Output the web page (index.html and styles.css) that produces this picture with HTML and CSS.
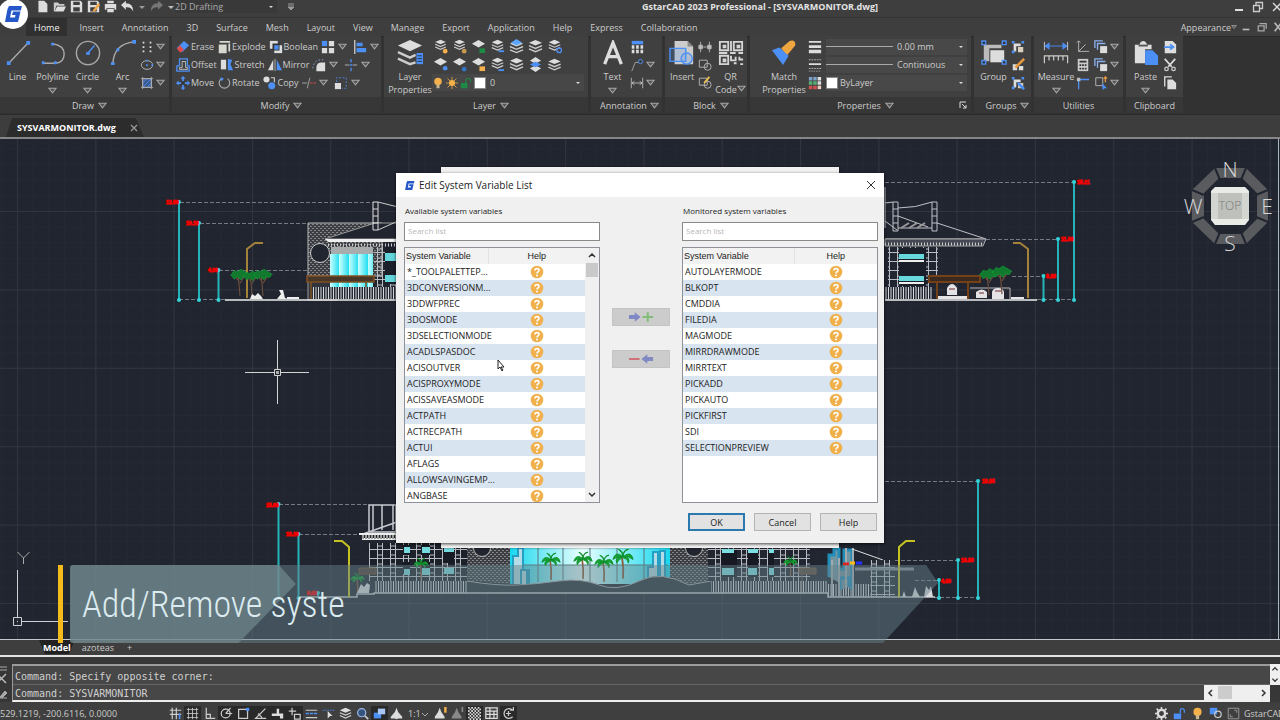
FILE: index.html
```html
<!DOCTYPE html>
<html lang="en">
<head>
<meta charset="utf-8">
<title>GstarCAD 2023 Professional - [SYSVARMONITOR.dwg]</title>
<link rel="stylesheet" href="styles.css">
</head>
<body>
<svg class="defs" aria-hidden="true">
<defs>
<symbol id="caret" viewBox="0 0 8 8"><path d="M.8 2h6.4L4 6z" fill="#555" stroke="#a5a5a5"/></symbol>
<symbol id="layers" viewBox="0 0 16 16"><path d="M8 1l7 3-7 3-7-3z" fill="#ddd"/><path d="M1 7l7 3 7-3M1 10.500l7 3 7-3" fill="none" stroke="#ccc" stroke-width="1.500"/></symbol>
<symbol id="logo" viewBox="0 0 20 20"><path d="M6 2h13l-1.200 4.500H8.500L7 13.500h5l.5-2.500H9l1-3.500h7.500L15 18H2L4.500 5z" fill="#2557c9"/></symbol>
<symbol id="help" viewBox="0 0 14 14"><circle cx="7" cy="7" r="6.300" fill="#f0b04c"/><path d="M5 5.500C5 3 9 3 9 5.200 9 6.800 7 6.800 7 8.500" fill="none" stroke="#fff" stroke-width="1.600"/><circle cx="7" cy="10.500" r="1" fill="#fff"/></symbol>
<symbol id="points" viewBox="0 0 16 16"><path d="M3 2h2v2H3zM11 2h2v2h-2zM3 7h2v2H3zM11 7h2v2h-2zM3 12h2v2H3zM11 12h2v2h-2z" fill="#ddd"/></symbol>
<symbol id="ellipse" viewBox="0 0 16 16"><ellipse cx="8" cy="8" rx="6.500" ry="5" fill="none" stroke="#bbb"/><path d="M7 7h2v2H7zM7 2h2v2H7zM13 7h2v2h-2z" fill="#4c8ff5"/></symbol>
<symbol id="hatch" viewBox="0 0 16 16"><path d="M3 3h10v10H3z" fill="#39598f" stroke="#ccc"/><path d="M3 8l5-5M3 13L13 3M8 13l5-5" stroke="#4c8ff5"/><path d="M1 3h14M1 13h14M3 1v14M13 1v14" stroke="#aaa"/></symbol>
<symbol id="erase" viewBox="0 0 16 16"><path d="M9 1l6 5-8 8-6-5z" fill="#4c8ff5"/><path d="M4.500 6L1 10l4 4.500 4-3.500z" fill="#e04a4a"/></symbol>
<symbol id="explode" viewBox="0 0 16 16"><path d="M2 5h9v10H2zM3 1h12v2H3zM13 4h2v9h-2z" fill="#d8d8d0"/></symbol>
<symbol id="boolean" viewBox="0 0 16 16"><path d="M1 1h9v9H1z" fill="#ddd"/><path d="M6 6h9v9H6z" fill="#ddd"/><path d="M4 4h8v8H4z" fill="#333"/><path d="M6 6h5v5H6z" fill="#4c8ff5"/></symbol>
<symbol id="offset" viewBox="0 0 16 16"><path d="M1 15V9h3V1h9v8h2v6z" fill="none" stroke="#4c8ff5" stroke-width="1.500"/><path d="M4 13v-2h3V4h4v7h2v2z" fill="none" stroke="#ccc"/></symbol>
<symbol id="stretch" viewBox="0 0 16 16"><path d="M1 2h6v11H1z" fill="#ddd"/><path d="M9 1l5 1-2 5 3 7H9z" fill="#4c8ff5"/></symbol>
<symbol id="mirror" viewBox="0 0 16 16"><path d="M6 2v12H0z" fill="#ddd"/><path d="M10 2v12h6z" fill="#4c8ff5"/><path d="M8 1v14" stroke="#bbb"/></symbol>
<symbol id="move" viewBox="0 0 16 16"><path d="M8 0l3 3H9v4h4V5l3 3-3 3V9H9v4h2l-3 3-3-3h2V9H3v2L0 8l3-3v2h4V3H5z" fill="#4c8ff5"/><path d="M6 6h4v4H6z" fill="#333"/></symbol>
<symbol id="rotate" viewBox="0 0 16 16"><path d="M5 3A6 6 0 1 0 12 3" fill="none" stroke="#aaa" stroke-width="1.300"/><path d="M4 1l4 2-3 3z" fill="#4c8ff5"/></symbol>
<symbol id="copy" viewBox="0 0 16 16"><circle cx="4" cy="4" r="3.500" fill="#ddd"/><circle cx="10" cy="11" r="4" fill="#4c8ff5"/><path d="M9 2h4v5" fill="none" stroke="#ccc" stroke-width="1.300"/></symbol>
<symbol id="array" viewBox="0 0 16 16"><path d="M1 1h6v6H1z" fill="#4c8ff5"/><path d="M9 1h6v6H9zM1 9h6v6H1zM9 9h6v6H9z" fill="#ddd"/></symbol>
<symbol id="align" viewBox="0 0 16 16"><path d="M2 0v16" stroke="#ccc" stroke-width="1.500"/><path d="M4 3h7v4H4zM4 9h11v5H4z" fill="#4c8ff5"/></symbol>
<symbol id="fillet" viewBox="0 0 16 16"><path d="M5 15V11q0-6 6-6h4v10z" fill="#ddd"/><path d="M1 12Q2 1 13 2" fill="none" stroke="#8aa6d0" stroke-dasharray="2"/></symbol>
<symbol id="break" viewBox="0 0 16 16"><path d="M1 8h5M10 8h5" stroke="#bbb"/><path d="M8 1v4M8 11v4M6.500 8h3" stroke="#4c8ff5" stroke-width="1.500"/></symbol>
<symbol id="trim" viewBox="0 0 16 16"><path d="M0 8h6M6 14L9 2" stroke="#aaa"/><path d="M9 8h7" stroke="#e04a4a" stroke-dasharray="3 1"/></symbol>
<symbol id="scale" viewBox="0 0 16 16"><path d="M3 7V2h11v12H9" fill="none" stroke="#4c8ff5" stroke-dasharray="2"/><path d="M1 8h7v7H1z" fill="#ddd"/></symbol>
<symbol id="table" viewBox="0 0 16 16"><path d="M2 1h13v4H2z" fill="#4c8ff5"/><path d="M2 6h3v4H2zM7 6h3v4H7zM12 6h3v4h-3zM2 11h3v4H2zM7 11h3v4H7zM12 11h3v4h-3z" fill="#ddd"/></symbol>
<symbol id="leader" viewBox="0 0 16 16"><path d="M2 15L6 5h4" fill="none" stroke="#aaa"/><circle cx="12" cy="4" r="2.500" fill="none" stroke="#4c8ff5"/></symbol>
<symbol id="dim" viewBox="0 0 16 16"><path d="M1.500 2v12M14.500 2v12M2 8h12M5 6L2 8l3 2M11 6l3 2-3 2" fill="none" stroke="#bbb"/></symbol>
<symbol id="attr" viewBox="0 0 16 16"><path d="M3 2v12M13 2v12M1 6h4v4H1zM11 6h4v4h-4zM6 8h4" fill="#bbb" stroke="#bbb"/></symbol>
<symbol id="blk" viewBox="0 0 16 16"><path d="M1.500 2.500h9v8h-9z" fill="none" stroke="#bbb"/><circle cx="11" cy="10" r="4" fill="none" stroke="#bbb"/></symbol>
<symbol id="list3" viewBox="0 0 16 16"><path d="M1 1h14v2H1zM1 6h14v3H1zM1 11h14v4H1z" fill="#ddd"/></symbol>
<symbol id="ltype" viewBox="0 0 16 16"><path d="M1 2h14M1 12h14" stroke="#bbb" stroke-dasharray="2 1"/><path d="M1 7h14" stroke="#ddd" stroke-width="2"/><path d="M1 15h14" stroke="#bbb" stroke-dasharray="1"/></symbol>
<symbol id="palette" viewBox="0 0 16 16"><path d="M1 1h4v4H1zM6 1h4v4H6z" fill="#7fa0c8"/><path d="M11 1h4v4h-4zM11 6h4v4h-4z" fill="#ddd"/><path d="M1 6h4v4H1zM6 6h4v4H6z" fill="#55b070"/><path d="M1 11h4v4H1zM6 11h4v4H6z" fill="#d05050"/><path d="M11 11h4v4h-4z" fill="#e8d0c0"/></symbol>
<symbol id="grp" viewBox="0 0 16 16"><path d="M3 4h8v3H6v6H3z" fill="#ddd"/><path d="M8 8h6v6H8z" fill="#d8d0bc"/><path d="M1 1h3v3H1zM12 1h3v3h-3zM1 12h3v3H1z" fill="#4c8ff5"/></symbol>
<symbol id="grpedit" viewBox="0 0 16 16"><path d="M2 7h5v7H2zM9 9h5v5H9z" fill="#ddd"/><path d="M5 11L15 1" stroke="#e89a3c" stroke-width="3"/></symbol>
<symbol id="axes" viewBox="0 0 16 16"><path d="M3 1v12h12M3 13l8-8M1 3l2-2 2 2" fill="none" stroke="#bbb"/></symbol>
<symbol id="calc" viewBox="0 0 16 16"><path d="M2 1h12v14H2z" fill="#ccc"/><path d="M4 3h8v2H4zM4 7h2v2H4zM7 7h2v2H7zM10 7h2v2h-2zM4 11h2v2H4zM7 11h2v2H7zM10 11h2v2h-2z" fill="#333"/></symbol>
<symbol id="corner" viewBox="0 0 16 16"><path d="M3 15V4h12" fill="none" stroke="#4c8ff5" stroke-width="1.500"/><path d="M1 2h4v4H1z" fill="#bbb"/></symbol>
<symbol id="stack" viewBox="0 0 16 16"><path d="M1 9V1h9M4 11V4h9" fill="none" stroke="#8ab0ee" stroke-width="1.500"/><path d="M7 7h8v8H7z" fill="#ddd"/></symbol>
<symbol id="qselect" viewBox="0 0 16 16"><path d="M2 2h8v9H2z" fill="none" stroke="#bbb"/><path d="M9 8l6 6h-3l-2 2z" fill="#4c8ff5"/><path d="M13 1v6M11 3l2-2 2 2" fill="none" stroke="#e89a3c" stroke-width="1.500"/></symbol>
<symbol id="clipin" viewBox="0 0 16 16"><path d="M2 1h9l4 4v10H2z" fill="#ddd"/><path d="M1 8h11M8 5l4 3-4 3" fill="none" stroke="#4c8ff5" stroke-width="2"/></symbol>
<symbol id="cut" viewBox="0 0 16 16"><path d="M2 1l8 9M14 1L6 10" stroke="#ddd" stroke-width="2"/><circle cx="4" cy="12.500" r="2" fill="none" stroke="#ccc" stroke-width="1.500"/><circle cx="12" cy="12.500" r="2" fill="none" stroke="#ccc" stroke-width="1.500"/></symbol>
<symbol id="copyclip" viewBox="0 0 16 16"><path d="M2 12V1h8" fill="none" stroke="#ddd" stroke-width="1.500"/><path d="M5 4h6l4 4v7H5z" fill="#ddd"/></symbol>
<symbol id="lock" viewBox="0 0 16 16"><path d="M1 8h9v7H1z" fill="#1f8a46"/><path d="M8 8V4q0-2 3-2t3 2v3" fill="none" stroke="#1f8a46" stroke-width="1.500"/></symbol>
<symbol id="bulb" viewBox="0 0 16 16"><circle cx="8" cy="6" r="5" fill="#f4b04a"/><path d="M6 10h4v5H6z" fill="#c9b68e"/></symbol>
<symbol id="sun" viewBox="0 0 16 16"><circle cx="8" cy="8" r="4" fill="#f4b04a"/><path d="M8 0v16M0 8h16M2 2l12 12M14 2L2 14" stroke="#f4b04a"/></symbol>
<symbol id="palm" viewBox="0 0 24 34"><path d="M11 10q2 11 1 23" fill="none" stroke="#8a5a3a" stroke-width="2"/><path d="M12 9Q4 2 1 12q5-4 10-3Q3 9 5 16q3-5 7-6 5 1 6 6 2-7-5-7 5-1 10 3Q21 2 12 9q0-7-5-8 5 4 5 8 0-6 6-8-6 0-6 8z" fill="#18a535" stroke="#0c8c28"/></symbol>
<symbol id="tree" viewBox="0 0 24 34"><path d="M10 10l2 23M12 18l5-8M11 16L6 9" fill="none" stroke="#70503c" stroke-width="1.300"/><path d="M1 8l4-5 4 1 4-3 5 3 5 3-3 4-4-1-3 4-4-4-4 3z" fill="#127a2e" stroke="#10a83a" stroke-dasharray="2 1"/></symbol>
<pattern id="minor" width="15.660" height="15.700" patternUnits="userSpaceOnUse" x="17" y="211"><path d="M.5 0v16M0 .5h16" stroke="#242833"/></pattern>
<pattern id="major" width="78.300" height="78.400" patternUnits="userSpaceOnUse" x="17" y="211"><path d="M.5 0v79M0 .5h79" stroke="#30343e"/></pattern>
<pattern id="brick" width="4" height="4" patternUnits="userSpaceOnUse"><path d="M0 0h4v4H0z" fill="#3c3e43"/><path d="M0 .5h2M2 2.500h2" stroke="#85878b"/></pattern>
<pattern id="fence" width="5" height="12" patternUnits="userSpaceOnUse"><path d="M1 0v12M3.500 0v12" stroke="#d8dade"/></pattern>
<pattern id="wall" width="13" height="9" patternUnits="userSpaceOnUse"><path d="M.5 0v9M5.500 0v9M0 .5h13M0 6h6" stroke="#b9bcc2"/></pattern>
<pattern id="dots" width="4" height="4" patternUnits="userSpaceOnUse"><path d="M0 0h2v2H0zM2 2h2v2H2z" fill="#ddd"/></pattern>
<linearGradient id="cyan" spreadMethod="repeat" x1="0" x2=".22"><stop offset="0" stop-color="#c9ffff"/><stop offset="1" stop-color="#22dff0"/></linearGradient>
<linearGradient id="glass"><stop offset="0" stop-color="#18d8ee"/><stop offset=".45" stop-color="#eaffff"/><stop offset="1" stop-color="#18d8ee"/></linearGradient>
</defs>
</svg>

<header class="app-head">
  <div class="titlebar">
    <button class="logo" aria-label="Application menu"><svg width="20" height="20"><use href="#logo"/></svg></button>
    <div class="qat">
      <button aria-label="New"><svg viewBox="0 0 16 16"><path d="M3 1h7l4 4v10H3z" fill="#ddd"/></svg></button>
      <button aria-label="Open"><svg viewBox="0 0 16 16"><path d="M1 3h5l2 2h6v2H4L2 14H1z" fill="#ccc"/><path d="M5 8h11l-3 6H2z" fill="#ddd"/></svg></button>
      <button aria-label="Save"><svg viewBox="0 0 16 16"><path d="M1 1h12l2 2v12H1zM4 2v4h8V2zM4 9v5h8V9z" fill="#ddd" fill-rule="evenodd"/></svg></button>
      <button aria-label="Save as"><svg viewBox="0 0 16 16"><path d="M1 1h12l2 2v12H1zM4 2v4h8V2zM4 9v5h8V9z" fill="#ddd" fill-rule="evenodd"/><path d="M8 14l7-9" stroke="#f4a640" stroke-width="3"/></svg></button>
      <button aria-label="Print"><svg viewBox="0 0 16 16"><path d="M4 1h8v3H4zM1 5h14v7h-2v-2H3v2H1zM4 11h8v4H4z" fill="#ddd"/></svg></button>
      <button aria-label="Undo"><svg viewBox="0 0 16 16"><path d="M0 6l6-5v3q9 0 9 10-3-6-9-5v3z" fill="#ddd"/></svg></button>
      <button class="thin" aria-label="Undo list"><svg viewBox="0 0 8 8"><path d="M1 3l3 3 3-3" fill="#999"/></svg></button>
      <button aria-label="Redo"><svg viewBox="0 0 16 16"><path d="M16 6l-6-5v3Q1 4 1 14q3-6 9-5v3z" fill="#777"/></svg></button>
      <button class="thin" aria-label="Redo list"><svg viewBox="0 0 8 8"><path d="M1 3l3 3 3-3" fill="#bbb"/></svg></button>
    </div>
    <label class="combo workspace"><select aria-label="Workspace"><option>2D Drafting</option></select></label>
    <button class="thin more" aria-label="Customize"><svg viewBox="0 0 8 8"><path d="M1 1h6M1 3h6M1 4l3 3 3-3" stroke="#999" fill="#999"/></svg></button>
    <h1>GstarCAD 2023 Professional - [SYSVARMONITOR.dwg]</h1>
    <div class="winbtns">
      <button aria-label="Minimize"><svg viewBox="0 0 12 12"><path d="M2 9h8" stroke="#ddd" stroke-width="2"/></svg></button>
      <button aria-label="Restore"><svg viewBox="0 0 12 12"><path d="M1.500 4.500h6v6h-6zM4 4V1.500h6.500v6H8" fill="none" stroke="#ccc" stroke-width="1.300"/></svg></button>
      <button aria-label="Close"><svg viewBox="0 0 12 12"><path d="M2 2l8 8M10 2l-8 8" stroke="#ddd" stroke-width="1.300"/></svg></button>
    </div>
  </div>
  <nav class="tabs">
    <button class="on">Home</button><button>Insert</button><button>Annotation</button><button>3D</button><button>Surface</button><button>Mesh</button><button>Layout</button><button>View</button><button>Manage</button><button>Export</button><button>Application</button><button>Help</button><button>Express</button><button>Collaboration</button>
    <span class="grow"></span>
    <button class="appear">Appearance<svg class="c"><use href="#caret"/></svg></button>
    <div class="winbtns small">
      <button aria-label="Minimize drawing"><svg viewBox="0 0 12 12"><path d="M2 9h8" stroke="#bbb" stroke-width="2"/></svg></button>
      <button aria-label="Restore drawing"><svg viewBox="0 0 12 12"><path d="M1.500 4.500h7v6h-7zM3 2h8v6" fill="none" stroke="#aaa" stroke-width="1.500"/></svg></button>
      <button aria-label="Close drawing"><svg viewBox="0 0 12 12"><path d="M2 1l8 10M10 1L2 11" stroke="#bbb" stroke-width="2"/></svg></button>
    </div>
  </nav>
</header>

<section class="ribbon">
  <div class="panel draw"><div class="tools">
    <button class="big"><svg viewBox="0 0 28 28"><path d="M4 25L25 3" stroke="#aaa" stroke-width="1.500"/><path d="M2 23h4v4H2zM23 1h4v4h-4z" fill="#4c8ff5"/></svg><span>Line</span></button>
    <button class="big"><svg viewBox="0 0 28 28"><path d="M14 4q12 2 12 11 0 9-9 10H3" fill="none" stroke="#aaa" stroke-width="1.500"/><path d="M2 23h3v3H2zM12 3h3v3h-3zM15 23h3v3h-3z" fill="#4c8ff5"/></svg><span>Polyline</span><svg class="c"><use href="#caret"/></svg></button>
    <button class="big"><svg viewBox="0 0 28 28"><circle cx="14" cy="14" r="12.500" fill="none" stroke="#aaa" stroke-width="1.500"/><path d="M14 14l7-8" stroke="#4c8ff5" stroke-width="1.500"/><path d="M12 13h4v3h-4z" fill="#4c8ff5"/></svg><span>Circle</span><svg class="c"><use href="#caret"/></svg></button>
    <button class="big"><svg viewBox="0 0 28 28"><path d="M3 26Q4 4 26 2" fill="none" stroke="#aaa" stroke-width="1.500"/><path d="M1 24h4v3H1zM24 0h4v4h-4zM7 9h3v3H7z" fill="#4c8ff5"/></svg><span>Arc</span><svg class="c"><use href="#caret"/></svg></button>
    <div class="rows"><button aria-label="Points"><svg class="i"><use href="#points"/></svg><svg class="c"><use href="#caret"/></svg></button><button aria-label="Ellipse"><svg class="i"><use href="#ellipse"/></svg><svg class="c"><use href="#caret"/></svg></button><button aria-label="Hatch"><svg class="i"><use href="#hatch"/></svg><svg class="c"><use href="#caret"/></svg></button></div>
  </div><h2>Draw <svg class="c"><use href="#caret"/></svg></h2></div>

  <div class="panel modify"><div class="tools"><div class="rows">
    <div class="row"><button><svg class="i"><use href="#erase"/></svg>Erase</button><button><svg class="i"><use href="#explode"/></svg>Explode</button><button><svg class="i"><use href="#boolean"/></svg>Boolean</button><button aria-label="Array"><svg class="i"><use href="#array"/></svg><svg class="c"><use href="#caret"/></svg></button><button aria-label="Align"><svg class="i"><use href="#align"/></svg><svg class="c"><use href="#caret"/></svg></button></div>
    <div class="row"><button><svg class="i"><use href="#offset"/></svg>Offset</button><button><svg class="i"><use href="#stretch"/></svg>Stretch</button><button><svg class="i"><use href="#mirror"/></svg>Mirror</button><button aria-label="Fillet"><svg class="i"><use href="#fillet"/></svg><svg class="c"><use href="#caret"/></svg></button><button aria-label="Break"><svg class="i"><use href="#break"/></svg><svg class="c"><use href="#caret"/></svg></button></div>
    <div class="row"><button><svg class="i"><use href="#move"/></svg>Move</button><button><svg class="i"><use href="#rotate"/></svg>Rotate</button><button><svg class="i"><use href="#copy"/></svg>Copy</button><button aria-label="Trim"><svg class="i"><use href="#trim"/></svg><svg class="c"><use href="#caret"/></svg></button><button aria-label="Scale"><svg class="i"><use href="#scale"/></svg><svg class="c"><use href="#caret"/></svg></button></div>
  </div></div><h2>Modify <svg class="c"><use href="#caret"/></svg></h2></div>

  <div class="panel layer"><div class="tools">
    <button class="big"><svg viewBox="0 0 28 28"><path d="M14 0l13 6-13 6L1 6z" fill="#ddd"/><path d="M1 13l13 6 6-3M1 20l13 6 6-2" fill="none" stroke="#ccc" stroke-width="2.500"/><path d="M21 14h7v12h-7z" fill="#4c8ff5"/><path d="M22 17h5M22 20h5M22 23h5" stroke="#234"/></svg><span>Layer<br>Properties</span></button>
    <div class="rows">
      <div class="row lay"><button aria-label="Layer off"><svg class="i" viewBox="0 0 16 16"><use href="#layers" width="16" height="13"/><circle cx="13" cy="13" r="2.500" fill="#f4b04a"/></svg></button><button aria-label="Layer freeze"><svg class="i" viewBox="0 0 16 16"><use href="#layers" width="16" height="13"/><circle cx="13" cy="13" r="2.500" fill="#c89a50"/></svg></button><button aria-label="Layer unlock"><svg class="i" viewBox="0 0 16 16"><path d="M8 1l7 4-7 4-7-4z" fill="#ddd"/><path d="M9 10h6v5H9z" fill="#1f8a46"/></svg></button><button aria-label="Match layer"><svg class="i" viewBox="0 0 16 16"><use href="#layers" width="16" height="14"/><path d="M9 13h6" stroke="#4c8ff5" stroke-width="2"/></svg></button><button aria-label="Isolate"><svg class="i" viewBox="0 0 16 16"><use href="#layers" width="16" height="16" y="1"/><path d="M8 0l6 4-6 3-6-3z" fill="#5ba6ff"/></svg></button><button aria-label="Previous layer"><svg class="i" viewBox="0 0 16 16"><use href="#layers" width="16" height="16"/></svg></button><button aria-label="Layer states"><svg class="i" viewBox="0 0 16 16"><use href="#layers" width="16" height="14"/><circle cx="13" cy="12" r="2.500" fill="none" stroke="#4c8ff5" stroke-width="1.500"/></svg></button></div>
      <div class="row lay"><button aria-label="Layer on"><svg class="i" viewBox="0 0 16 16"><path d="M8 1l7 4-7 4-7-4z" fill="#ddd"/><circle cx="13" cy="12" r="2.500" fill="#4c8ff5"/></svg></button><button aria-label="Layer thaw"><svg class="i" viewBox="0 0 16 16"><path d="M8 1l7 4-7 4-7-4z" fill="#ddd"/><circle cx="13" cy="13" r="2.500" fill="#3472c4"/></svg></button><button aria-label="Layer lock"><svg class="i" viewBox="0 0 16 16"><path d="M8 1l7 4-7 4-7-4z" fill="#ddd"/><path d="M9 10h6v5H9z" fill="#f4b04a"/></svg></button><button aria-label="Change to current"><svg class="i" viewBox="0 0 16 16"><use href="#layers" width="16" height="14"/><path d="M9 14h6" stroke="#4c8ff5" stroke-width="2"/></svg></button><button aria-label="Walk"><svg class="i" viewBox="0 0 16 16"><use href="#layers" width="16" height="16"/></svg></button><button aria-label="Unisolate"><svg class="i" viewBox="0 0 16 16"><path d="M8 0l6 4-6 3-6-3zM8 9l6 3-6 4-6-4z" fill="#ddd"/><path d="M2 8l6-3 6 3-6 3z" fill="#4c8ff5"/></svg></button><button aria-label="Merge"><svg class="i" viewBox="0 0 16 16"><use href="#layers" width="16" height="15" y="1"/></svg></button></div>
      <div class="row field"><svg class="i"><use href="#bulb"/></svg><svg class="i"><use href="#sun"/></svg><svg class="i"><use href="#lock"/></svg><i class="swatch"></i><label class="combo grow"><select aria-label="Layer"><option>0</option></select></label></div>
    </div>
  </div><h2>Layer <svg class="c"><use href="#caret"/></svg></h2></div>

  <div class="panel annot"><div class="tools">
    <button class="big"><svg viewBox="0 0 28 28"><path d="M5 26L14 3l9 23M8.500 18h11" fill="none" stroke="#ddd" stroke-width="3.500"/></svg><span>Text</span><svg class="c"><use href="#caret"/></svg></button>
    <div class="rows"><button aria-label="Table"><svg class="i"><use href="#table"/></svg></button><button aria-label="Leader"><svg class="i"><use href="#leader"/></svg><svg class="c"><use href="#caret"/></svg></button><button aria-label="Dimension"><svg class="i"><use href="#dim"/></svg><svg class="c"><use href="#caret"/></svg></button></div>
  </div><h2>Annotation <svg class="c"><use href="#caret"/></svg></h2></div>

  <div class="panel block"><div class="tools">
    <button class="big"><svg viewBox="0 0 28 28"><path d="M6 1h14l6 6v19H6z" fill="#ccc"/><path d="M20 1v6h6z" fill="#888"/><path d="M1 9h17v14H1z" fill="#4c8ff533" stroke="#4c8ff5" stroke-width="1.500"/><circle cx="19" cy="20" r="6" fill="#4c8ff533" stroke="#4c8ff5" stroke-width="1.500"/></svg><span>Insert</span></button>
    <div class="rows"><button aria-label="Attributes"><svg class="i"><use href="#attr"/></svg></button><button aria-label="Create block"><svg class="i"><use href="#blk"/></svg></button><button aria-label="Edit block"><svg class="i" viewBox="0 0 16 16"><use href="#blk" width="16" height="16"/><path d="M7 8l6-7" stroke="#f4c04a" stroke-width="2"/></svg></button></div>
    <button class="big"><svg viewBox="0 0 28 28"><path d="M2 2h9v9H2zM17 2h9v9h-9zM2 17h9v9H2zM6 6h2v2H6zM21 6h2v2h-2zM6 21h2v2H6zM14 1v11M1 14h9M13 14h6M22 14h5M14 17v5h5v-4M17 25h3M23 18v3h4M24 26h3" fill="none" stroke="#d5d5d5" stroke-width="2"/></svg><span>QR<br>Code<svg class="c"><use href="#caret"/></svg></span></button>
  </div><h2>Block <svg class="c"><use href="#caret"/></svg></h2></div>

  <div class="panel props"><div class="tools">
    <button class="big"><svg viewBox="0 0 28 28"><path d="M11 9L20 1q7-2 6 5l-9 11z" fill="#f0a63e"/><path d="M1 11l8-3 10 9-6 10z" fill="#4c8ff5"/></svg><span>Match<br>Properties</span></button>
    <div class="rows">
      <div class="row"><svg class="i"><use href="#list3"/></svg><label class="combo grow"><i class="sample"></i><select aria-label="Lineweight"><option>0.00 mm</option></select></label></div>
      <div class="row"><svg class="i"><use href="#ltype"/></svg><label class="combo grow"><i class="sample"></i><select aria-label="Linetype"><option>Continuous</option></select></label></div>
      <div class="row"><svg class="i"><use href="#palette"/></svg><label class="combo grow"><i class="swatch"></i><select aria-label="Color"><option>ByLayer</option></select></label></div>
    </div>
  </div><h2>Properties <svg class="c"><use href="#caret"/></svg><svg class="launch" viewBox="0 0 8 8"><path d="M1 7V1h6M3 3l4 4V4M7 7H4" fill="none" stroke="#ddd"/></svg></h2></div>

  <div class="panel groups"><div class="tools">
    <button class="big"><svg viewBox="0 0 28 28"><path d="M3 5h19v4H9v14H3z" fill="#bbb"/><path d="M10 11h15v13H10z" fill="#ddd"/><path d="M1 1h4v4H1zM23 1h4v4h-4zM1 22h4v4H1zM23 22h4v4h-4z" fill="#333" stroke="#4c8ff5" stroke-width="1.500"/></svg><span>Group</span></button>
    <div class="rows"><button aria-label="Ungroup"><svg class="i"><use href="#grp"/></svg></button><button aria-label="Edit group"><svg class="i"><use href="#grpedit"/></svg></button><button aria-label="Select group"><svg class="i" viewBox="0 0 16 16"><use href="#grp" width="16" height="16"/><path d="M8 8l7 7" stroke="#4c8ff5" stroke-width="3"/></svg></button></div>
  </div><h2>Groups <svg class="c"><use href="#caret"/></svg></h2></div>

  <div class="panel utils"><div class="tools">
    <button class="big"><svg viewBox="0 0 28 28"><path d="M1.500 2v9M26.500 2v9" stroke="#ccc"/><path d="M3 6.500h22M7 3L2 6.500 7 10M21 3l5 3.500-5 3.500" fill="#4c8ff5" stroke="#4c8ff5"/><path d="M1.500 25v-8h25v8M6.500 17v5M11.500 17v5M16.500 17v5M21.500 17v5" fill="none" stroke="#ccc" stroke-width="1.300"/></svg><span>Measure</span><svg class="c"><use href="#caret"/></svg></button>
    <div class="rows"><button aria-label="UCS"><svg class="i"><use href="#axes"/></svg></button><button aria-label="Calculator"><svg class="i"><use href="#calc"/></svg></button><button aria-label="Origin"><svg class="i"><use href="#corner"/></svg></button></div>
    <div class="rows"><button aria-label="Properties list"><svg class="i"><use href="#stack"/></svg><svg class="c"><use href="#caret"/></svg></button><button aria-label="Draw order"><svg class="i"><use href="#stack"/></svg><svg class="c"><use href="#caret"/></svg></button><button aria-label="Quick select"><svg class="i"><use href="#qselect"/></svg><svg class="c"><use href="#caret"/></svg></button></div>
  </div><h2 class="plain">Utilities</h2></div>

  <div class="panel clip"><div class="tools">
    <button class="big"><svg viewBox="0 0 28 28"><path d="M2 5h5q1-4 4-4t4 4h5v5h-7v15H2z" fill="#ddd"/><path d="M6 6h10" stroke="#555" stroke-width="2"/><path d="M13 11h8l6 6v10H13z" fill="#4c8ff5"/></svg><span>Paste</span><svg class="c"><use href="#caret"/></svg></button>
    <div class="rows"><button aria-label="Copy with base point"><svg class="i"><use href="#clipin"/></svg></button><button aria-label="Cut"><svg class="i"><use href="#cut"/></svg></button><button aria-label="Copy to clipboard"><svg class="i"><use href="#copyclip"/></svg></button></div>
  </div><h2 class="plain">Clipboard</h2></div>
</section>

<div class="doctabs"><div class="doctab"><button>SYSVARMONITOR.dwg</button><button class="x" aria-label="Close tab"><svg viewBox="0 0 8 8"><path d="M1 1l6 6M7 1L1 7" stroke="#999" stroke-width="1.300"/></svg></button></div></div>

<main class="stage">
<svg class="scene" viewBox="0 139 1280 500" preserveAspectRatio="xMidYMid slice" role="img" aria-label="Building elevations">
  <path d="M0 139h1280v500H0z" fill="#212530"/><path d="M0 139h1280v500H0z" fill="url(#minor)"/><path d="M0 139h1280v500H0z" fill="url(#major)"/>
  <g stroke="#757983" stroke-dasharray="4 2" fill="none"><path d="M180 202.500h193M200 223.500h108M219 270.500h90M179 299.500h46M885 182.500h189M986 239.500h72M1012 276.500h32M1037 299.500h37M279 504.500h90M299 534.500h60M885 481.500h92M895 560.500h63M915 580.500h24M934 597.500h44"/></g>
  <g stroke="#25b3ba" stroke-width="2"><path d="M179 202v98M199 223v77M218.500 270v30M1074 182v118M1058 239v61M1043.500 276v24M278.500 504v94M298.500 534v64M318 593v5M978 481v117M958 560v38M939 580v18"/></g>
  <g fill="#35d3d8"><circle cx="179" cy="202" r="2"/><circle cx="199" cy="223" r="2"/><circle cx="218.500" cy="270" r="2"/><circle cx="179" cy="300" r="2"/><circle cx="199" cy="300" r="2"/><circle cx="218.500" cy="300" r="2"/><circle cx="1074" cy="182" r="2"/><circle cx="1058" cy="239" r="2"/><circle cx="1043.500" cy="276" r="2"/><circle cx="1074" cy="300" r="2"/><circle cx="1058" cy="300" r="2"/><circle cx="1043.500" cy="300" r="2"/><circle cx="278.500" cy="504" r="2"/><circle cx="298.500" cy="534" r="2"/><circle cx="298.500" cy="598" r="2"/><circle cx="318" cy="593" r="2"/><circle cx="978" cy="481" r="2"/><circle cx="958" cy="560" r="2"/><circle cx="939" cy="580" r="2"/><circle cx="978" cy="598" r="2"/><circle cx="958" cy="598" r="2"/><circle cx="939" cy="598" r="2"/></g>
  <g class="dims"><text x="166" y="204">12.60</text><text x="186" y="225">10.10</text><text x="208" y="272">4.00</text><text x="1077" y="184">15.21</text><text x="1061" y="241">11.08</text><text x="1046" y="278">3.20</text><text x="266" y="507">15.60</text><text x="286" y="536">10.20</text><text x="307" y="595">0.60</text><text x="982" y="483">19.85</text><text x="961" y="562">10.80</text><text x="941" y="583">4.60</text></g>

  <g>
    <path d="M308 223h74v53h-74z" fill="url(#brick)" stroke="#bbb"/><path d="M308 276h29v24h-29z" fill="#31343d" stroke="#999"/>
    <path d="M325 239l50-16h25v16z" fill="#212530" stroke="#999"/>
    <path d="M373 202h5v28h-5zM373 209h5M373 216h5M373 223h5" fill="none" stroke="#ddd"/><path d="M378 202l20 5M378 230l20-9" stroke="#ccc"/>
    <path d="M325 239h75v3h-72z" fill="#eee"/><path d="M328 245h72" stroke="#ccc" stroke-width="3" stroke-dasharray="1 2"/>
    <path d="M331 247h42v7h-42z" fill="#a9acac"/>
    <path d="M330 254h43v36h-43z" fill="url(#cyan)"/>
    <circle cx="320" cy="253" r="9.500" fill="#212530" stroke="#ccc"/>
    <path d="M374 247h26v40h-26z" fill="url(#wall)"/><path d="M385 247h12v37h-12z" fill="#1b1f29"/><path d="M385 253h15v8h-15zM385 275h15v7h-15z" fill="#64d5da"/>
    <path d="M307 276h67v6h-67zM311 282v18M366 282v18" fill="#47382a" stroke="#805021" stroke-width="1.500"/>
    <path d="M313 287h87v12h-87z" fill="#242832"/><path d="M313 287h87v12h-87z" fill="url(#fence)"/><path d="M225 300h175" stroke="#eee" stroke-width="1.500"/>
    <path d="M247 298v-49l8-6h8" fill="none" stroke="#a5823a" stroke-width="2"/>
    <use href="#tree" x="230" y="266" width="20" height="33"/><use href="#tree" x="243" y="267" width="18" height="32"/><use href="#tree" x="253" y="266" width="20" height="33"/>
    <path d="M250 299l2-5 3 2 3-3 3 3 2 3zM277 299l4-5-2-4h4l2 8 4 1zM287 297h12v2h-12z" fill="#eee"/>
  </g>
  <g>
    <path d="M885 187v41M893 202h5v29h-5zM893 209h5M893 216h5M893 223h5M932 202h5v29h-5zM932 209h5M932 216h5M932 223h5M898 208q18 0 34-6M898 216l30 11M898 228h34M937 223l49 16h-101M885 203l8-1M885 221l12 9" fill="none" stroke="#bfc1c6"/>
    <path d="M901 228l8-5M909 228l8-5M917 228l8-5" stroke="#999" stroke-width="2"/>
    <path d="M885 239h101l-3 7H885z" fill="#444852" stroke="#aaa"/><path d="M885 244h98" stroke="#ccc" stroke-width="3" stroke-dasharray="1 2"/>
    <path d="M888 247h50v40h-50z" fill="url(#wall)"/><path d="M899 248h27v38h-27z" fill="#1b1f29"/><path d="M899 254h25v5h-25zM899 276h25v5h-25z" fill="#67d9dd"/><path d="M899 261h25M899 283h25" stroke="#eee" stroke-width="2"/>
    <path d="M885 287h48v12h-48z" fill="url(#fence)"/>
    <path d="M929 276h51v6h-51zM937 282v17M968 282v17" fill="#39291e" stroke="#744017" stroke-width="2"/>
    <path d="M885 300h152" stroke="#eee" stroke-width="1.500"/><path d="M970 288h40v11" fill="none" stroke="#bbb"/>
    <path d="M938 299v-3h29v3zM947 295v-7q5-8 10 0v7zM976 298v-6q6-5 11 0v6zM992 299v-7q1-4 6-4t6 4v7zM1011 297h13v2h-13z" fill="#e4e4e7"/><path d="M949 289h6M979 293h5M995 291h6" stroke="#702830"/>
    <use href="#tree" x="979" y="266" width="20" height="32"/><use href="#tree" x="990" y="265" width="24" height="30"/>
    <path d="M1028 298v-49l-8-6h-7" fill="none" stroke="#a5823a" stroke-width="2"/>
  </g>
  <g>
    <path d="M369 505h27v27h-27zM373 505v25M382 505v25M393 505v25M397 522l-34 12h34" fill="#212530" stroke="#c8cacf" stroke-width="1.500"/>
    <path d="M359 534h38M362 539h35" stroke="#eee" stroke-width="2"/><path d="M362 537h35" stroke="#999" stroke-width="4" stroke-dasharray="2 1"/>
    <path d="M369 543h99v38h-99z" fill="#1d212a"/><path d="M369 543h99v38h-99z" fill="url(#wall)"/>
    <path d="M403 545h7v10h-7zM421 545h9v10h-9zM443 545h11v18h-11zM403 562h7v12h-7zM421 562h9v12h-9z" fill="#181b24"/><path d="M404 547h6v6h-6zM422 547h8v6h-8zM444 548h10v4h-10zM404 569h6v6h-6zM422 568h8v7h-8zM444 568h10v6h-10z" fill="#75dadd"/>
    <path d="M467 548h45v36q-22-1-45-4zM667 548h43v32q-22 6-43 4z" fill="url(#brick)"/>
    <path d="M510 548h160v36H510z" fill="url(#glass)"/><path d="M538 548v34M563 548v34M590 548v34M617 548v34M644 548v34M512 565h156" stroke="#58777a"/>
    <path d="M513 584v-28h5v-8h5v22h4v14M521 584v-14h8v14M648 584v-17h5v-15h5v30M660 584v-33h5v33" fill="#b4dce7" stroke="#249fc5" stroke-width="2"/>
    <circle cx="482" cy="548" r="8.500" fill="#212530" stroke="#bbb"/><circle cx="694" cy="548" r="8.500" fill="#212530" stroke="#bbb"/>
    <use href="#palm" x="541" y="550" width="20" height="33"/><use href="#palm" x="573" y="548" width="20" height="35"/><use href="#palm" x="594" y="554" width="20" height="29"/><use href="#palm" x="612" y="546" width="22" height="36"/><use href="#palm" x="413" y="556" width="16" height="26"/>
    <path d="M467 581q30 5 50 4t42-4 40 4 40-4 50 4l22-4v12H467z" fill="#2b323d"/><path d="M467 581q30 5 50 4t42-4 40 4 40-4 50 4l22-4" fill="none" stroke="#aaa"/>
    <path d="M708 545h102v36H708z" fill="#222630"/><path d="M708 545h102v36H708z" fill="url(#wall)"/><path d="M721 550h16v27h-16zM748 550h10v27h-10zM768 550h6v27h-6z" fill="#171a23"/><path d="M722 549h12v4h-12zM748 549h10v4h-10zM769 549h5v4h-5zM722 568h12v7h-12zM748 568h9v7h-9zM769 568h5v7h-5z" fill="#7ce0e3"/>
    <use href="#palm" x="783" y="553" width="15" height="27"/><path d="M799 568h17v6h-17zM802 574v19" fill="#5a4a3c" stroke="#76513a"/>
    <path d="M375 581h92v12h-92zM711 581h117v12H711z" fill="url(#fence)"/><path d="M828 584h56v13h-56z" fill="url(#fence)"/>
    <path d="M300 597h57v-3h17v-1h454v4h107" fill="none" stroke="#c5c8cc" stroke-width="1.500"/>
    <path d="M829 577v-22h5v-6h5v20h5v-19h8v40M840 590v-12h9v9" fill="#7295a2" stroke="#238db9" stroke-width="3"/><path d="M832 560v36M839 558v38M846 548v47M853 548v48" stroke="#a4abb0" stroke-width="2"/>
    <path d="M843 564h6" stroke="#d22" stroke-width="3"/><path d="M850 563h5" stroke="#fb1" stroke-width="3"/><path d="M856 563h6" stroke="#23f" stroke-width="3"/>
    <path d="M852 549l31 11" stroke="#ddd"/><path d="M870 560h25v36h-25z" fill="#272c37"/><path d="M870 560h25v36h-25z" fill="url(#wall)"/><path d="M855 569h59" stroke="#858b94" stroke-width="3"/>
    <path d="M899 597v-50l7-6h9M349 597v-50l-7-6h-8" fill="none" stroke="#c5c322" stroke-width="2"/>
    <use href="#palm" x="350" y="569" width="15" height="28"/><path d="M359 568h17v6h-17z" fill="#4c3b32" stroke="#6c482a"/>
    <path d="M357 593l4-9 3 3 3-4 3 2-1 8zM902 597l2-6 2 6zM912 597l3-10 2 5 3 5zM924 597l2-11 3 4 2-4 2 11z" fill="#d8dadd"/>
  </g>
  <path d="M245 372.500h29M281 372.500h28M277.500 340v29M277.500 376v28M274.500 369.500h6v6h-6z" fill="none" stroke="#d4d4d4"/><path d="M276 371h3v3h-3z" fill="#aaa"/>
  <path d="M17.500 570v47M22 621.500h46M13.500 617.500h8v8h-8zM17.500 621v1" fill="none" stroke="#cfd0d4"/><path d="M17.500 552l6 6 6-6M23.500 558v6" fill="none" stroke="#aaa"/>
  <g><path fill-rule="evenodd" d="M1215 168h31l22 22v32l-22 22h-31l-23-22v-32zM1219 178l-15 15v26l15 15h23l15-15v-26l-15-15z" fill="#595b5f"/><path d="M1215 168l5 12M1246 168l-5 12M1268 190l-12 5M1268 222l-12-5M1246 244l-5-12M1215 244l5-12M1192 222l12-5M1192 190l12 5" stroke="#212530" stroke-width="2"/><path d="M1215 187h30l4 4v29l-4 5h-30l-4-5v-29z" fill="#e9ebe6"/><path d="M1218 193h24v26h-24z" fill="#b3b7b0"/><path d="M1211 206h38" stroke="#c6c9c3" stroke-width="26" opacity=".6"/></g>
  <g class="compass"><text x="1230" y="177">N</text><text x="1230" y="251">S</text><text x="1193" y="214">W</text><text x="1267" y="214">E</text><text class="top" x="1230" y="210">TOP</text></g>
  <path d="M1278.500 139v500" stroke="#a8b8b8"/>
</svg>

<div class="behind"></div>
<form class="dialog" onsubmit="return false" aria-label="Edit System Variable List">
  <div class="dlg-title"><svg width="11" height="11"><use href="#logo" width="11" height="11"/></svg><span>Edit System Variable List</span><button type="button" aria-label="Close dialog"><svg viewBox="0 0 10 10"><path d="M1 1l8 8M9 1L1 9" stroke="#333"/></svg></button></div>
  <div class="dlg-body">
    <section><label for="s1">Available system variables</label><input id="s1" type="text" placeholder="Search list">
      <div class="list"><table><thead><tr><th>System Variable</th><th>Help</th></tr></thead><tbody>
        <tr><td>*_TOOLPALETTEP...</td><td><svg><use href="#help"/></svg></td></tr>
        <tr><td>3DCONVERSIONM...</td><td><svg><use href="#help"/></svg></td></tr>
        <tr><td>3DDWFPREC</td><td><svg><use href="#help"/></svg></td></tr>
        <tr><td>3DOSMODE</td><td><svg><use href="#help"/></svg></td></tr>
        <tr><td>3DSELECTIONMODE</td><td><svg><use href="#help"/></svg></td></tr>
        <tr><td>ACADLSPASDOC</td><td><svg><use href="#help"/></svg></td></tr>
        <tr><td>ACISOUTVER</td><td><svg><use href="#help"/></svg></td></tr>
        <tr><td>ACISPROXYMODE</td><td><svg><use href="#help"/></svg></td></tr>
        <tr><td>ACISSAVEASMODE</td><td><svg><use href="#help"/></svg></td></tr>
        <tr><td>ACTPATH</td><td><svg><use href="#help"/></svg></td></tr>
        <tr><td>ACTRECPATH</td><td><svg><use href="#help"/></svg></td></tr>
        <tr><td>ACTUI</td><td><svg><use href="#help"/></svg></td></tr>
        <tr><td>AFLAGS</td><td><svg><use href="#help"/></svg></td></tr>
        <tr><td>ALLOWSAVINGEMP...</td><td><svg><use href="#help"/></svg></td></tr>
        <tr><td>ANGBASE</td><td><svg><use href="#help"/></svg></td></tr>
      </tbody></table>
      <div class="vscroll"><svg viewBox="0 0 8 8"><path d="M1 5l3-3 3 3" fill="none" stroke="#333" stroke-width="1.500"/></svg><i></i><svg viewBox="0 0 8 8"><path d="M1 3l3 3 3-3" fill="none" stroke="#333" stroke-width="1.500"/></svg></div></div>
    </section>
    <div class="transfer">
      <button type="button" aria-label="Add"><svg viewBox="0 0 28 12"><path d="M1 4h6V1l6 5-6 5V8H1z" fill="#8189c4"/><path d="M15 6h11M20.500 1v10" stroke="#7fbe74" stroke-width="2"/></svg></button>
      <button type="button" aria-label="Remove"><svg viewBox="0 0 28 12"><path d="M1 6h11" stroke="#d07078" stroke-width="2"/><path d="M26 4h-6V1l-6 5 6 5V8h6z" fill="#8189c4"/></svg></button>
    </div>
    <section><label for="s2">Monitored system variables</label><input id="s2" type="text" placeholder="Search list">
      <div class="list wide"><table><thead><tr><th>System Variable</th><th>Help</th></tr></thead><tbody>
        <tr><td>AUTOLAYERMODE</td><td><svg><use href="#help"/></svg></td></tr>
        <tr><td>BLKOPT</td><td><svg><use href="#help"/></svg></td></tr>
        <tr><td>CMDDIA</td><td><svg><use href="#help"/></svg></td></tr>
        <tr><td>FILEDIA</td><td><svg><use href="#help"/></svg></td></tr>
        <tr><td>MAGMODE</td><td><svg><use href="#help"/></svg></td></tr>
        <tr><td>MIRRDRAWMODE</td><td><svg><use href="#help"/></svg></td></tr>
        <tr><td>MIRRTEXT</td><td><svg><use href="#help"/></svg></td></tr>
        <tr><td>PICKADD</td><td><svg><use href="#help"/></svg></td></tr>
        <tr><td>PICKAUTO</td><td><svg><use href="#help"/></svg></td></tr>
        <tr><td>PICKFIRST</td><td><svg><use href="#help"/></svg></td></tr>
        <tr><td>SDI</td><td><svg><use href="#help"/></svg></td></tr>
        <tr><td>SELECTIONPREVIEW</td><td><svg><use href="#help"/></svg></td></tr>
      </tbody></table></div>
    </section>
  </div>
  <div class="dlg-foot"><button class="primary">OK</button><button type="button">Cancel</button><button type="button">Help</button></div>
  <svg class="cursor" viewBox="0 0 8 13"><path d="M1 1v9l2-2 2 4 1-1-2-3h3z" fill="#fff" stroke="#222"/></svg>
</form>

<div class="caption"><svg viewBox="0 0 880 78" preserveAspectRatio="none"><path d="M0 0h5v78H0z" fill="#f5bb1b"/><path d="M12 3q0-3 3-3h850l12 18-55 60H15q-3 0-3-3z" fill="#67828a" opacity=".48"/><path d="M12 3q0-3 3-3h205l17 19-57 59H15q-3 0-3-3z" fill="#738b8f" opacity=".68"/></svg><p>Add/Remove syste</p></div>
</main>

<nav class="layouts"><button class="on">Model</button><button>azoteas</button><button aria-label="New layout">+</button></nav>

<section class="command">
  <div class="grip"><svg viewBox="0 0 12 44"><path d="M0 3h7M0 6h7" stroke="#aaa"/><path d="M-3 10l9 9M6 10l-9 9" stroke="#bbb" stroke-width="1.500"/><path d="M0 33l5-6 2 2-5 5zM0 34h7" fill="#aaa" stroke="#aaa"/></svg></div>
  <div class="cmdbox"><p>Command: Specify opposite corner:</p><div class="cmdline"><label for="cmd">Command:</label><input id="cmd" type="text" value="SYSVARMONITOR"><div class="hscroll"><svg viewBox="0 0 8 8"><path d="M5 1L2 4l3 3" fill="none" stroke="#333" stroke-width="1.500"/></svg><i></i><svg viewBox="0 0 8 8"><path d="M3 1l3 3-3 3" fill="none" stroke="#333" stroke-width="1.500"/></svg></div></div></div>
  <div class="vbar"><svg viewBox="0 0 8 8"><path d="M1 5l3-3 3 3" fill="none" stroke="#333" stroke-width="1.500"/></svg><svg viewBox="0 0 8 8"><path d="M1 3l3 3 3-3" fill="none" stroke="#333" stroke-width="1.500"/></svg></div>
</section>

<footer class="status">
  <output>529.1219, -200.6116, 0.0000</output>
  <div class="toggles">
    <button aria-label="Snap"><svg viewBox="0 0 16 16"><path d="M4 1v14M9 1v14M1 4h14M1 9h14" stroke="#ccc" stroke-width="1.500"/><path d="M13 8v7" stroke="#4c8ff5" stroke-width="2"/></svg></button>
    <button class="on" aria-label="Grid"><svg viewBox="0 0 16 16"><path d="M3 1v14M8 1v14M13 1v14M1 3h14M1 8h14M1 13h14" stroke="#ccc"/></svg></button>
    <button aria-label="Ortho"><svg viewBox="0 0 16 16"><path d="M4 1v13h11M4 9h5v5" fill="none" stroke="#ccc" stroke-width="1.500"/></svg></button>
    <button class="on" aria-label="Polar"><svg viewBox="0 0 16 16"><circle cx="7" cy="8" r="5.500" fill="none" stroke="#ccc" stroke-width="1.500"/><path d="M7 8h8M7 8l6-7" stroke="#ccc" stroke-width="1.500"/></svg></button>
    <button class="on" aria-label="Object snap"><svg viewBox="0 0 16 16"><path d="M2 3h11v11H2z" fill="none" stroke="#ccc" stroke-width="1.500"/><path d="M11 1h4v4h-4z" fill="#4c8ff5"/></svg></button>
    <button class="on" aria-label="Tracking"><svg viewBox="0 0 16 16"><path d="M14 2L2 14h13M5 8l5 5" fill="none" stroke="#ccc" stroke-width="1.500"/></svg></button>
    <button class="on" aria-label="Dynamic UCS"><svg viewBox="0 0 16 16"><path d="M1 8h6V2h3v6h5v6h-4v-3H1z" fill="#ddd"/></svg></button>
    <button class="on" aria-label="Dynamic input"><svg viewBox="0 0 16 16"><path d="M5 1v9M1 5h9M8 9h7v6H8z" fill="none" stroke="#ccc" stroke-width="1.500"/></svg></button>
    <button aria-label="Lineweight display"><svg viewBox="0 0 16 16"><path d="M1 4h14M1 13h14" stroke="#ccc" stroke-width="1.500"/><path d="M1 8h14" stroke="#4c8ff5" stroke-width="2" stroke-dasharray="4 1"/></svg></button>
    <button aria-label="Cycling"><svg viewBox="0 0 16 16"><path d="M1 4h14" stroke="#4c8ff5" stroke-dasharray="2 1"/><path d="M7 5v9l3-3h3z" fill="#ddd"/></svg></button>
    <button aria-label="Layers"><svg viewBox="0 0 16 16"><use href="#layers"/></svg></button>
    <button aria-label="Zoom"><svg viewBox="0 0 16 16"><circle cx="7" cy="7" r="5" fill="#36537d" stroke="#9bbbe8" stroke-width="1.500"/><path d="M11 11l4 4" stroke="#ccc" stroke-width="2"/></svg></button>
    <button class="on" aria-label="Windows"><svg viewBox="0 0 16 16"><path d="M1 7h9v7H1z" fill="#4c8ff5"/><path d="M6 2h9v7H6z" fill="#a8c6f4"/></svg></button>
    <button aria-label="Annotation scale"><svg viewBox="0 0 16 16"><path d="M8 1l2 5 5 6v2h-5l-2 1-2-1H1v-2l5-6z" fill="#ddd"/></svg></button>
    <button class="scale">1:1<svg viewBox="0 0 8 8"><path d="M1 3l3 3 3-3" fill="none" stroke="#aaa"/></svg></button>
    <button aria-label="Annotation visibility"><svg viewBox="0 0 16 16"><path d="M7 1l2 5 4 6v2H1v-2l4-6z" fill="#ddd"/><path d="M14 0v7" stroke="#f4b04a" stroke-width="3"/></svg></button>
    <button aria-label="Auto scale"><svg viewBox="0 0 16 16"><path d="M7 1l2 5 4 6v2H1v-2l4-6zM13 0h2v6h-2z" fill="#888"/></svg></button>
    <button class="on" aria-label="Transparency"><svg viewBox="0 0 16 16"><path d="M0 0h16v16H0z" fill="url(#dots)"/></svg></button>
    <button aria-label="Table view"><svg viewBox="0 0 16 16"><path d="M1 1h14v13H1zM1 5h14M1 9h14M6 1v13M11 5v9" fill="none" stroke="#ddd" stroke-width="1.500"/></svg></button>
    <button class="on" aria-label="Cycle"><svg viewBox="0 0 16 16"><path d="M13 4a6 6 0 1 0 0 8M8 5v6M5 8h6M10 4h4V0" fill="none" stroke="#ccc" stroke-width="1.500"/></svg></button>
  </div>
  <span class="grow"></span>
  <div class="toggles right">
    <button aria-label="Settings"><svg viewBox="0 0 16 16"><circle cx="8" cy="8" r="4.500" fill="none" stroke="#ddd" stroke-width="3"/><path d="M8 0v3M8 13v3M0 8h3M13 8h3M2 2l2 2M14 2l-2 2M2 14l2-2M14 14l-2-2" stroke="#ddd" stroke-width="2"/></svg></button>
    <button aria-label="Lock UI"><svg viewBox="0 0 16 16"><path d="M1 8h9v7H1z" fill="#4c8ff5"/><path d="M9 8V4q0-2 2-2t3 2v3" fill="none" stroke="#4c8ff5" stroke-width="1.500"/></svg></button>
    <button aria-label="Tips"><svg viewBox="0 0 16 16"><use href="#bulb"/></svg></button>
    <button aria-label="Find"><svg viewBox="0 0 16 16"><path d="M1 1h9v8H1z" fill="#4c8ff5"/><circle cx="11" cy="9" r="4" fill="none" stroke="#ccc" stroke-width="1.500"/></svg></button>
    <button aria-label="Full screen"><svg viewBox="0 0 16 16"><path d="M1.500 1.500h13v13h-13zM9 4h3v3M7 12H4V9" fill="none" stroke="#aaa"/></svg></button>
  </div>
  <span class="brand">GstarCAD</span>
</footer>
</body>
</html>
```
FILE: styles.css
```css
* { box-sizing: border-box; }
body { margin: 0; min-height: 100vh; display: flex; flex-direction: column; overflow: hidden; background: #333; color: #ccc; font: 9px/13px "Open Sans", "Noto Sans", sans-serif; }
button, select, input { font: inherit; color: inherit; border: 0; margin: 0; padding: 0; background: none; border-radius: 0; }
button { white-space: nowrap; }
h1, h2, p { margin: 0; font: inherit; }
svg { display: block; flex: none; }
.defs { position: absolute; width: 0; height: 0; }
.grow { flex: 1; }
.c { width: 9px; height: 9px; }
.i { width: 14px; height: 14px; }

.app-head { position: relative; background: #3e3e3e; }
.titlebar { display: flex; align-items: center; height: 18px; padding-left: 34px; padding-bottom: 4px; border-bottom: 1px solid #353535; }
.logo { position: absolute; left: -2px; top: -1px; width: 30px; height: 30px; border-radius: 50%; background: #fff; display: grid; place-items: center; z-index: 2; }
.qat { display: flex; align-items: center; gap: 4px; padding-left: 2px; }
.qat svg { width: 13px; height: 13px; }
.titlebar .thin svg { width: 8px; height: 8px; }
.combo { display: flex; align-items: center; position: relative; }
.combo select { appearance: none; flex: 1; min-width: 0; }
.combo::after { content: ""; border: 2px solid transparent; border-top: 2px solid #ddd; margin: 2px 4px 0 0; }
.workspace { width: 102px; color: #aaa; background: #393939; }
.more { margin-left: 10px; }
.titlebar h1 { flex: 1; text-align: center; font-weight: 700; color: #e4e4e4; padding-right: 8px; }
.winbtns { display: flex; gap: 7px; margin-right: -3px; }
.winbtns svg { width: 12px; height: 12px; }
.winbtns.small { gap: 6px; }
.winbtns.small svg { width: 10px; height: 10px; }
.tabs { display: flex; height: 18px; padding-left: 26px; align-items: stretch; }
.tabs > button { padding: 0 9px; }
.tabs .on { background: #303030; color: #eee; padding: 0 8px; margin-right: 3px; }
.tabs .winbtns { align-items: center; }
.tabs .appear { display: flex; align-items: center; padding: 0 4px 0 0; }
.appear .c { width: 6px; height: 6px; }

.ribbon { display: flex; gap: 3px; background: #323232; height: 79px; padding-bottom: 2px; box-shadow: inset 0 1px #2b2b2b, inset 0 -1px #2b2b2b; }
.panel { display: flex; flex-direction: column; background: #404040; }
.tools { flex: 1; display: flex; padding: 2px 4px 0; align-items: flex-start; }
.panel h2 { height: 16px; background: #373737; display: flex; align-items: center; justify-content: center; gap: 4px; position: relative; padding-left: 10px; }
.panel .plain { padding-left: 0; }
.big { display: flex; flex-direction: column; align-items: center; width: 35px; }
.big > svg:first-child { width: 26px; height: 26px; margin: 2px 0 4px; }
.big > .c { margin-top: 3px; }
.big .c { display: inline-block; }
.rows { display: flex; flex-direction: column; gap: 1px; }
.rows > * { height: 17px; }
.rows button { display: flex; align-items: center; gap: 2px; }
.row { display: flex; align-items: center; gap: 4px; }
.draw { width: 169px; }
.draw .tools { padding-left: 0; }
.modify { width: 209px; }
.modify .row { gap: 3px; }
.modify .row button { gap: 1px; }
.modify .row .c { margin: 0 3px 0 2px; }
.layer { width: 204px; }
.layer .big, .props .big { width: 44px; }
.layer .rows { flex: 1; }
.lay { gap: 4px; padding-left: 1px; }
.lay .i { width: 15px; height: 15px; }
.field { background: #474747; gap: 2px; }
.field .i { width: 12px; height: 12px; }
.swatch { width: 12px; height: 12px; background: #fff; border: 1px solid #888; margin-right: 2px; }
.annot { width: 71px; }
.annot h2 { gap: 3px; padding-left: 6px; }
.block { width: 82px; }
.block .tools, .groups .tools, .utils .tools, .clip .tools { padding-left: 2px; padding-right: 0; }
.block .rows { padding: 0 2px 0 1px; }
.block .big:last-child { width: 38px; }
.props { width: 221px; }
.props .tools { padding-left: 12px; }
.props .rows { flex: 1; padding-left: 2px; }
.props .combo { background: #484848; height: 16px; }
.sample { width: 67px; border-top: 1px solid #aaa; margin-right: 4px; }
.launch { width: 8px; height: 8px; position: absolute; right: 4px; top: 4px; }
.groups { width: 57px; }
.utils { width: 89px; }
.clip { width: 57px; }
.utils .big { width: 40px; }
.utils .rows + .rows { padding-left: 4px; }

.doctabs { height: 24px; background: #3d3d3d; border-bottom: 2px solid #85858a; padding: 3px 0 0 6px; }
.doctab { display: inline-flex; align-items: center; gap: 14px; height: 19px; padding: 0 6px 0 11px; background: #2c2c2c; color: #fff; font-weight: 700; clip-path: polygon(6px 0, calc(100% - 8px) 0, 100% 100%, 0 100%); }
.doctab .x svg { width: 8px; height: 8px; }

.stage { flex: 1; position: relative; min-height: 300px; border-bottom: 1px solid #c4c8cc; background: #212530; display: flex; justify-content: center; align-items: flex-start; z-index: 1; }
.scene { position: absolute; inset: 0; width: 100%; height: 100%; }
.dims { font: 700 5px "Liberation Sans", sans-serif; fill: #f00; stroke: #e00; }
.compass { font-size: 21px; font-weight: 300; fill: #d8d8d8; text-anchor: middle; }
.compass .top { font-size: 12px; fill: #777; }
.behind { position: absolute; top: 28px; width: 398px; height: 381px; background: #f1f1f1; box-shadow: 0 0 2px #0008; }
.dialog { position: relative; margin-top: 34px; width: 488px; background: #f0f0f0; color: #1c1c1c; box-shadow: 0 1px 3px #000b; padding-bottom: 12px; }
.dlg-title { display: flex; align-items: center; gap: 4px; height: 24px; background: #fff; padding: 0 8px; font-size: 10px; }
.dlg-title button { margin-left: auto; }
.dlg-title button svg { width: 10px; height: 10px; }
.dlg-body { display: flex; justify-content: space-between; padding: 7px 6px 0 8px; }
.dlg-body section { width: 196px; display: flex; flex-direction: column; }
.dlg-body label { font-size: 8px; padding-left: 1px; height: 18px; line-height: 14px; }
.dlg-body input { height: 19px; border: 1px solid #8a8a8a; background: #fff; padding: 0 3px 2px; font-size: 8px; width: 100%; }
.dlg-body input::placeholder { color: #b8b8b8; opacity: 1; }
.list { margin-top: 6px; border: 1px solid #8e9298; background: #fff; height: 256px; overflow: hidden; display: flex; align-items: stretch; }
.list table { width: 100%; flex: 1 1 0; border-collapse: collapse; table-layout: fixed; height: min-content; }
.list tr { height: 16px; }
.list th { background: #f2f2f2; font: 9px/15px "Liberation Sans", sans-serif; padding: 0 1px; height: 16px; }
.list th:first-child { text-align: left; width: 83px; border-right: 1px solid #e2e2e2; }
.wide th:first-child { width: 111px; }
.list td { padding: 0 0 0 2px; line-height: 16px; height: 16px; white-space: nowrap; }
.list td:last-child { padding: 0; }
.list td svg { width: 14px; height: 14px; margin: 0 auto; }
.list tbody tr:nth-child(even) { background: #d9e4f1; }
.vscroll { flex: none; width: 14px; background: #f0f0f0; display: flex; flex-direction: column; align-items: center; padding: 4px 0; }
.vscroll svg { width: 8px; height: 8px; }
.vscroll i { width: 12px; height: 14px; background: #c9c9c9; margin: 3px 0 auto; }
.transfer { display: flex; flex-direction: column; gap: 24px; padding-top: 104px; }
.transfer button { width: 58px; height: 18px; background: #ccc; border: 1px solid #c4c4c4; display: grid; place-items: center; }
.transfer svg { width: 27px; height: 12px; }
.dlg-foot { display: flex; justify-content: flex-end; gap: 9px; padding: 10px 7px 0; }
.dlg-foot button { width: 57px; height: 18px; background: #e2e2e2; border: 1px solid #b4b4b4; }
.dlg-foot .primary { border: 2px solid #2b79ad; }
.cursor { position: absolute; left: 101px; top: 186px; width: 8px; height: 13px; }
.caption { position: absolute; left: 58px; bottom: -4px; width: 69%; height: 78px; }
.caption svg { width: 100%; height: 100%; position: absolute; }
.caption p { position: relative; padding: 17px 24px; font: 300 36px/46px "Roboto Condensed", "Liberation Sans Narrow", sans-serif; color: #dcebf0; white-space: nowrap; }

.layouts { display: flex; height: 17px; padding-left: 39px; background: #3e3e3e; border-bottom: 2px solid #e2e2e2; }
.layouts button { padding: 0 6px; height: 14px; clip-path: polygon(0 0, 100% 0, calc(100% - 6px) 100%, 6px 100%); }
.layouts button + button { border-left: 1px solid #555; }
.layouts .on { background: #222; color: #fff; font-weight: 700; padding: 0 4px; }
.command { display: flex; padding-top: 7px; background: #373737; font-family: "DejaVu Sans Mono", monospace; font-size: 10px; color: #d0d0d0; }
.grip { width: 12px; height: 38px; overflow: hidden; }
.grip svg { width: 12px; height: 44px; }
.cmdbox { flex: 1; border: 1px solid #9b9b9b; border-width: 2px 0 2px 1px; border-bottom-color: #eee; background: #474747; }
.cmdbox p { height: 19px; line-height: 22px; padding-left: 2px; border-bottom: 1px solid #666; }
.cmdline { display: flex; height: 15px; line-height: 15px; padding-left: 2px; gap: 6px; }
.cmdline label, .cmdline input { padding-top: 1px; }
.cmdline input { flex: 1; }
.hscroll { width: 66px; background: #efefef; display: flex; align-items: center; justify-content: space-between; padding: 0 3px; }
.hscroll svg { width: 8px; height: 8px; }
.hscroll i { width: 14px; height: 13px; background: #ccc; margin: 0 auto 0 3px; }
.vbar { width: 10px; height: 21px; background: #efefef; display: flex; flex-direction: column; justify-content: space-between; align-items: center; padding: 2px 0; }
.vbar svg { width: 8px; height: 7px; }
.status { display: flex; align-items: center; height: 18px; background: #3f3f3f; padding-top: 5px; overflow: hidden; white-space: nowrap; }
.status output { width: 167px; }
.toggles { display: flex; }
.toggles button { min-width: 17px; height: 16px; display: flex; align-items: center; justify-content: center; }
.toggles .on { background: #292929; }
.toggles svg { width: 13px; height: 13px; }
.toggles .scale { padding: 0 3px; }
.toggles .scale svg { width: 8px; height: 8px; }
.right { gap: 1px; }
.brand { width: 38px; padding-left: 2px; overflow: hidden; }
```
